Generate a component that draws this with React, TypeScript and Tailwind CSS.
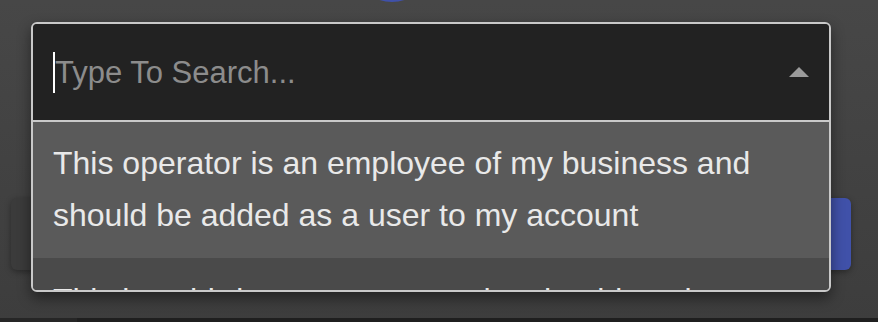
import React from 'react';

const options = [
  'This operator is an employee of my business and should be added as a user to my account',
  'This is a third party operator who should not be added as a user to my account',
];

export default function App() {
  return (
    <div className="relative w-full h-[322px] overflow-hidden bg-gradient-to-b from-[#474747] to-[#3d3d3d] flex flex-col font-['Liberation_Sans',Arial,Helvetica,sans-serif]">
      {/* modal content underneath the open dropdown */}
      <div className="ml-[352px] -mt-[78px] w-20 h-20 rounded-full bg-[#4051a9] shrink-0" />

      <div className="mt-[196px] flex justify-between pl-[11px] pr-[27px]">
        <div className="w-[400px] h-[72px] rounded-[6px] bg-[#3b3b3b] shadow-[0_2px_6px_rgba(0,0,0,0.35)]" />
        <div className="w-[390px] h-[72px] rounded-[6px] bg-[#4051a9] shadow-[0_2px_6px_rgba(0,0,0,0.35)]" />
      </div>

      <div className="mt-auto h-[4px] flex">
        <div className="w-[77px] bg-[#262626]" />
        <div className="flex-1 bg-[#1f1f1f]" />
      </div>

      {/* open select menu */}
      <div className="absolute left-[31px] top-[22px] w-[800px] border-2 border-[#c9c9c9] rounded-[6px] overflow-hidden shadow-[0_6px_14px_rgba(0,0,0,0.45)]">
        <div className="h-[98px] bg-[#222222] flex items-center pl-[20px] pr-[20px] border-b-2 border-[#c9c9c9]">
          <span className="w-[2px] h-[41px] bg-white shrink-0" />
          <span className="text-[31px] text-[#8c8c8c] leading-none">Type To Search...</span>
          <svg className="ml-auto" width="20" height="10" viewBox="0 0 20 10">
            <path d="M0 10 L10 0 L20 10 Z" fill="#9b9b9b" />
          </svg>
        </div>
        <div className="h-[168px] overflow-hidden">
          {options.map((o, i) => (
            <div
              key={i}
              className={`px-[20px] pb-[17px] text-[32px] leading-[52px] text-[#e9e9e9] ${i === 0 ? 'pt-[15px] bg-[#5a5a5a]' : 'pt-[16px] bg-[#4a4a4a]'}`}
            >
              {o}
            </div>
          ))}
        </div>
      </div>
    </div>
  );
}
